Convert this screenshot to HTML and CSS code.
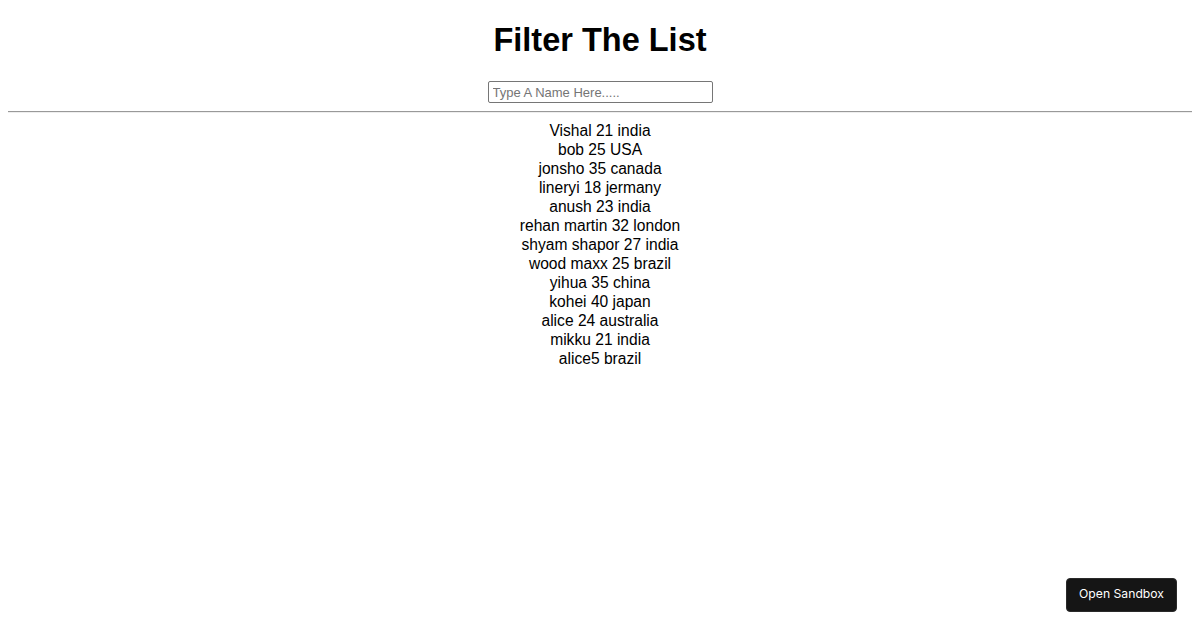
FILE: index.html
```html
<!DOCTYPE html>
<html>
<head>
<meta charset="utf-8">
<link rel="stylesheet" href="styles.css">
</head>
<body>
<div class="app">
  <h1 class="title">Filter The List</h1>
  <div class="search"><input class="search-input" type="text" placeholder="Type A Name Here....."></div>
  <hr class="rule">
  <ul class="people">
    <li>Vishal 21 india</li>
    <li>bob 25 USA</li>
    <li>jonsho 35 canada</li>
    <li>lineryi 18 jermany</li>
    <li>anush 23 india</li>
    <li>rehan martin 32 london</li>
    <li>shyam shapor 27 india</li>
    <li>wood maxx 25 brazil</li>
    <li>yihua 35 china</li>
    <li>kohei 40 japan</li>
    <li>alice 24 australia</li>
    <li>mikku 21 india</li>
    <li>alice5 brazil</li>
  </ul>
</div>
<button class="sandbox-btn">Open Sandbox</button>
</body>
</html>
```
FILE: styles.css
```css
body {
  margin: 8px;
  font-family: "Liberation Sans", Arial, sans-serif;
  color: #000;
  background: #fff;
}
.app {
  text-align: center;
}
.title {
  font-size: 32.5px;
  font-weight: bold;
  margin: 14px 0 22px;
  line-height: 37px;
}
.search {
  height: 22px;
  line-height: 0;
}
.search-input {
  box-sizing: border-box;
  width: 225px;
  height: 22px;
  padding: 1px 4px;
  border: 1px solid #767676;
  border-radius: 2px;
  font-family: "Liberation Sans", Arial, sans-serif;
  font-size: 13px;
  color: #000;
  outline: none;
}
.search-input::placeholder {
  color: #757575;
}
.rule {
  margin: 8px 0;
  border: 0;
  border-top: 1px solid #999;
  border-bottom: 1px solid #eee;
  height: 0;
}
.people {
  list-style: none;
  margin: 0;
  padding: 0;
  font-size: 15.6px;
  line-height: 19px;
}
.sandbox-btn {
  position: fixed;
  right: 23px;
  bottom: 18px;
  width: 111px;
  height: 34px;
  background: #151515;
  color: #fff;
  border: 1px solid #2a2a2a;
  border-radius: 4px;
  font-family: Inter, "Liberation Sans", sans-serif;
  font-size: 12.2px;
  padding: 0 0 3px;
}
```
